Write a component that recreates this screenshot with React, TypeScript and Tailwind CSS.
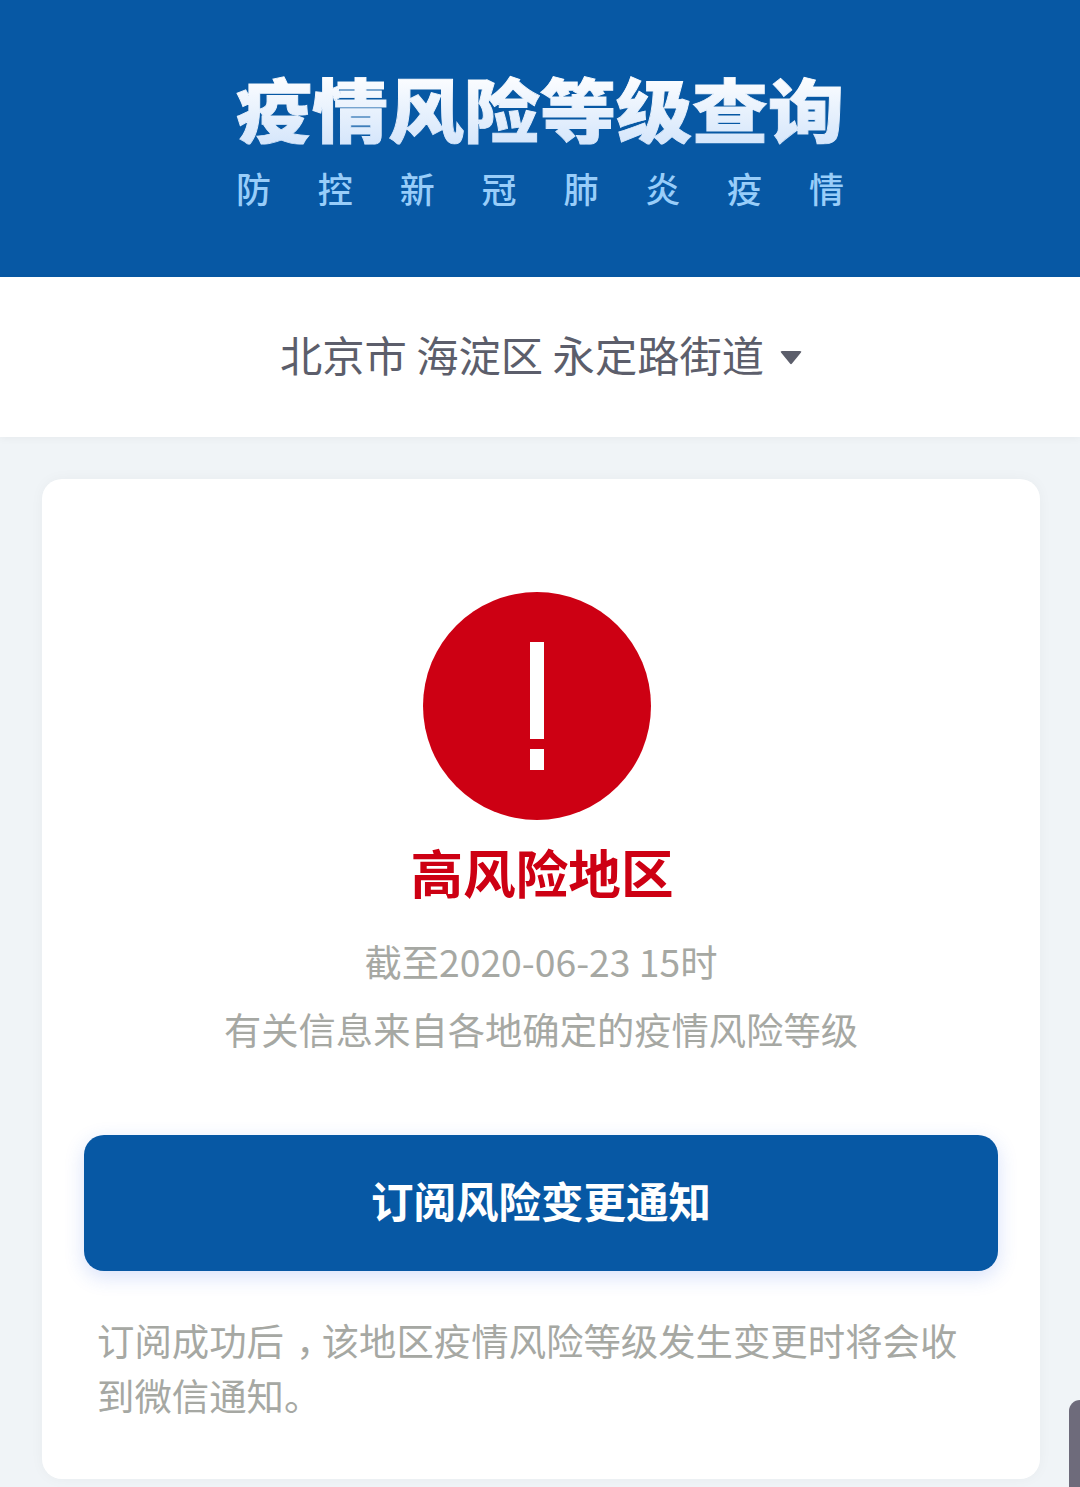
import React from 'react';

const cjk = "font-['Noto_Sans_CJK_SC','Noto_Sans',sans-serif]";

const App: React.FC = () => {
  const slogan = ['防', '控', '新', '冠', '肺', '炎', '疫', '情'];

  return (
    <div className={`relative h-[1487px] w-[1080px] overflow-hidden bg-[#f0f4f7] ${cjk}`}>
      <header className="flex h-[277px] flex-col items-center bg-[#0758a4] pt-[71px]">
        <h1 className="h-[80px] w-[608px] origin-top scale-y-[0.92] bg-gradient-to-b from-white to-[#d5e6fb] bg-clip-text text-center text-[76px] leading-[80px] font-black whitespace-nowrap text-transparent [-webkit-text-stroke:1px_transparent]">
          疫情风险等级查询
        </h1>
        <div className="mt-[17px] flex w-[608px] justify-between text-[35px] leading-[40px] font-medium text-[#98cdf9]">
          {slogan.map((ch, idx) => (
            <span key={idx}>{ch}</span>
          ))}
        </div>
      </header>

      <div className="flex h-[160px] items-center justify-center gap-[16px] bg-white pb-[6px] pl-[2px] text-[42.3px] text-[#5c5e6b] shadow-[0_2px_8px_rgba(0,0,0,0.04)]">
        <span>北京市 海淀区 永定路街道</span>
        <svg width="22" height="14" viewBox="0 0 22 14" className="mt-[8px]">
          <path d="M1 1.5 Q0 0 2 0 H20 Q22 0 21 1.5 L12 12.5 Q11 14 10 12.5 Z" fill="#5c5e6b" />
        </svg>
      </div>

      <main className="mt-[42px] mr-[40px] ml-[42px] flex h-[1000px] flex-col items-center rounded-[20px] bg-white px-[42px] pt-[113px] shadow-[0_0_14px_rgba(0,0,0,0.04)]">
        <svg width="228" height="228" viewBox="0 0 228 228" className="mr-[8px] shrink-0">
          <circle cx="114" cy="114" r="114" fill="#cd0013" />
          <rect x="107" y="50" width="14" height="97" fill="#fff" />
          <rect x="107" y="157" width="14" height="21" fill="#fff" />
        </svg>
        <h2 className="mt-[13px] ml-[2px] text-[52.6px] leading-[76px] font-bold text-[#cd0013]">高风险地区</h2>
        <p className="mt-[18px] text-[37.3px] leading-[68px] text-[#a6a8a3]">截至2020-06-23 15时</p>
        <p className="text-[37.3px] leading-[68px] text-[#a6a8a3]">有关信息来自各地确定的疫情风险等级</p>
        <button className="mt-[72px] flex h-[136px] w-full shrink-0 items-center justify-center rounded-[20px] bg-[#0758a4] pb-[7px] text-[42.5px] font-bold text-white shadow-[0_6px_20px_rgba(40,90,230,0.18)]">
          订阅风险变更通知
        </button>
        <div className="mt-[42px] w-full pr-[14px] pl-[13px] text-[37.4px] leading-[55px] whitespace-nowrap text-[#a6a8a3]">
          <p>
            订阅成功后<span className="mr-[7px] ml-[12px] [font-feature-settings:'halt']">，</span>该地区疫情风险等级发生变更时将会收
          </p>
          <p>到微信通知。</p>
        </div>
      </main>

      <div className="absolute top-[1400px] right-0 h-[87px] w-[11px] rounded-tl-[12px] bg-[#6e6b7b]" />
    </div>
  );
};

export default App;
